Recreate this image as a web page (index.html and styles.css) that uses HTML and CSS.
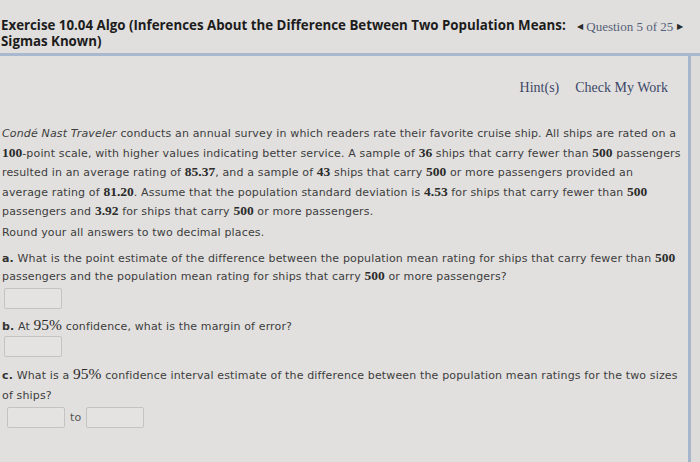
FILE: index.html
```html
<!DOCTYPE html>
<html>
<head>
<meta charset="utf-8">
<link rel="stylesheet" href="styles.css">
</head>
<body>
<header class="top">
  <h1 class="title">Exercise 10.04 Algo (Inferences About the Difference Between Two Population Means: Sigmas Known)</h1>
  <div class="nav"><span class="arrow">&#9664;</span> Question 5 of 25 <span class="arrow">&#9654;</span></div>
</header>
<main class="panel">
  <div class="tools"><span>Hint(s)</span><span>Check My Work</span></div>
  <p class="text"><i>Condé Nast Traveler</i> conducts an annual survey in which readers rate their favorite cruise ship. All ships are rated on a<br><span class="n">100</span>-point scale, with higher values indicating better service. A sample of <span class="n">36</span> ships that carry fewer than <span class="n">500</span> passengers<br>resulted in an average rating of <span class="n">85.37</span>, and a sample of <span class="n">43</span> ships that carry <span class="n">500</span> or more passengers provided an<br>average rating of <span class="n">81.20</span>. Assume that the population standard deviation is <span class="n">4.53</span> for ships that carry fewer than <span class="n">500</span><br>passengers and <span class="n">3.92</span> for ships that carry <span class="n">500</span> or more passengers.</p>
  <p class="text round">Round your all answers to two decimal places.</p>
  <div class="q qa">
    <p class="text"><b>a.</b> What is the point estimate of the difference between the population mean rating for ships that carry fewer than <span class="n">500</span> passengers and the population mean rating for ships that carry <span class="n">500</span> or more passengers?</p>
    <div class="answers"><span class="box"></span></div>
  </div>
  <div class="q qb">
    <p class="text"><b>b.</b> At <span class="n big">95%</span> confidence, what is the margin of error?</p>
    <div class="answers"><span class="box"></span></div>
  </div>
  <div class="q qc">
    <p class="text"><b>c.</b> What is a <span class="n big">95%</span> confidence interval estimate of the difference between the population mean ratings for the two sizes of ships?</p>
    <div class="answers"><span class="box"></span><span class="to">to</span><span class="box"></span></div>
  </div>
</main>
</body>
</html>
```
FILE: styles.css
```css
html, body {
  margin: 0;
  padding: 0;
}
body {
  width: 700px;
  height: 462px;
  overflow: hidden;
  background: #dddcda;
  font-family: "DejaVu Sans", Verdana, sans-serif;
  color: #3d3d3d;
}
.top {
  display: flex;
  align-items: flex-start;
  height: 36px;
  padding: 17px 0 0 1px;
  background: #e0dfdd;
  border-bottom: 3px solid #a7b8cf;
}
.title {
  margin: 0;
  width: 576px;
  font-family: "Open Sans", sans-serif;
  font-weight: 700;
  font-size: 13.3px;
  line-height: 16px;
  color: #1c1c1c;
}
.nav {
  margin-top: 2px;
  font-family: "Liberation Serif", serif;
  font-size: 13px;
  color: #56617a;
  white-space: nowrap;
}
.arrow {
  font-size: 8px;
  color: #2a2a2a;
  vertical-align: 2px;
}
.panel {
  width: 686px;
  height: 419px;
  padding-left: 2px;
  border-right: 3px solid #a5b6cd;
  background: #e1e0de;
}
.tools {
  display: flex;
  justify-content: flex-end;
  gap: 16px;
  padding: 24px 20px 0 0;
  font-family: "Liberation Serif", serif;
  font-size: 14px;
  color: #3c4868;
}
.text {
  margin: 0;
  font-size: 11px;
  letter-spacing: 0.15px;
  line-height: 19.5px;
}
.tools + .text {
  margin-top: 28px;
}
.round {
  margin-top: 1px;
}
.n {
  font-family: "Liberation Serif", serif;
  font-weight: 700;
  font-size: 13.5px;
  line-height: 0;
  letter-spacing: 0;
  color: #2b2b2b;
}
.big {
  font-size: 15.5px;
  font-weight: 400;
}
b {
  color: #333;
}
.qa {
  margin-top: 8px;
}
.qa .text {
  line-height: 18px;
}
.qb {
  margin-top: 8px;
}
.qc {
  margin-top: 9px;
}
.qc .text {
  line-height: 20px;
}
.answers {
  display: flex;
  align-items: center;
  gap: 5px;
  margin-top: 1px;
  padding-left: 2px;
}
.qa .answers {
  margin-top: 2px;
}
.qb .answers {
  margin-top: -1px;
}
.qc .answers {
  margin-top: 1px;
}
.box {
  width: 56px;
  height: 19px;
  border: 1px solid #c3c3c1;
  border-radius: 2px;
  background: #e4e3e1;
}
.qc .box:first-child {
  margin-left: 3px;
}
.to {
  font-size: 11px;
  letter-spacing: 0.15px;
  color: #555;
}
```
